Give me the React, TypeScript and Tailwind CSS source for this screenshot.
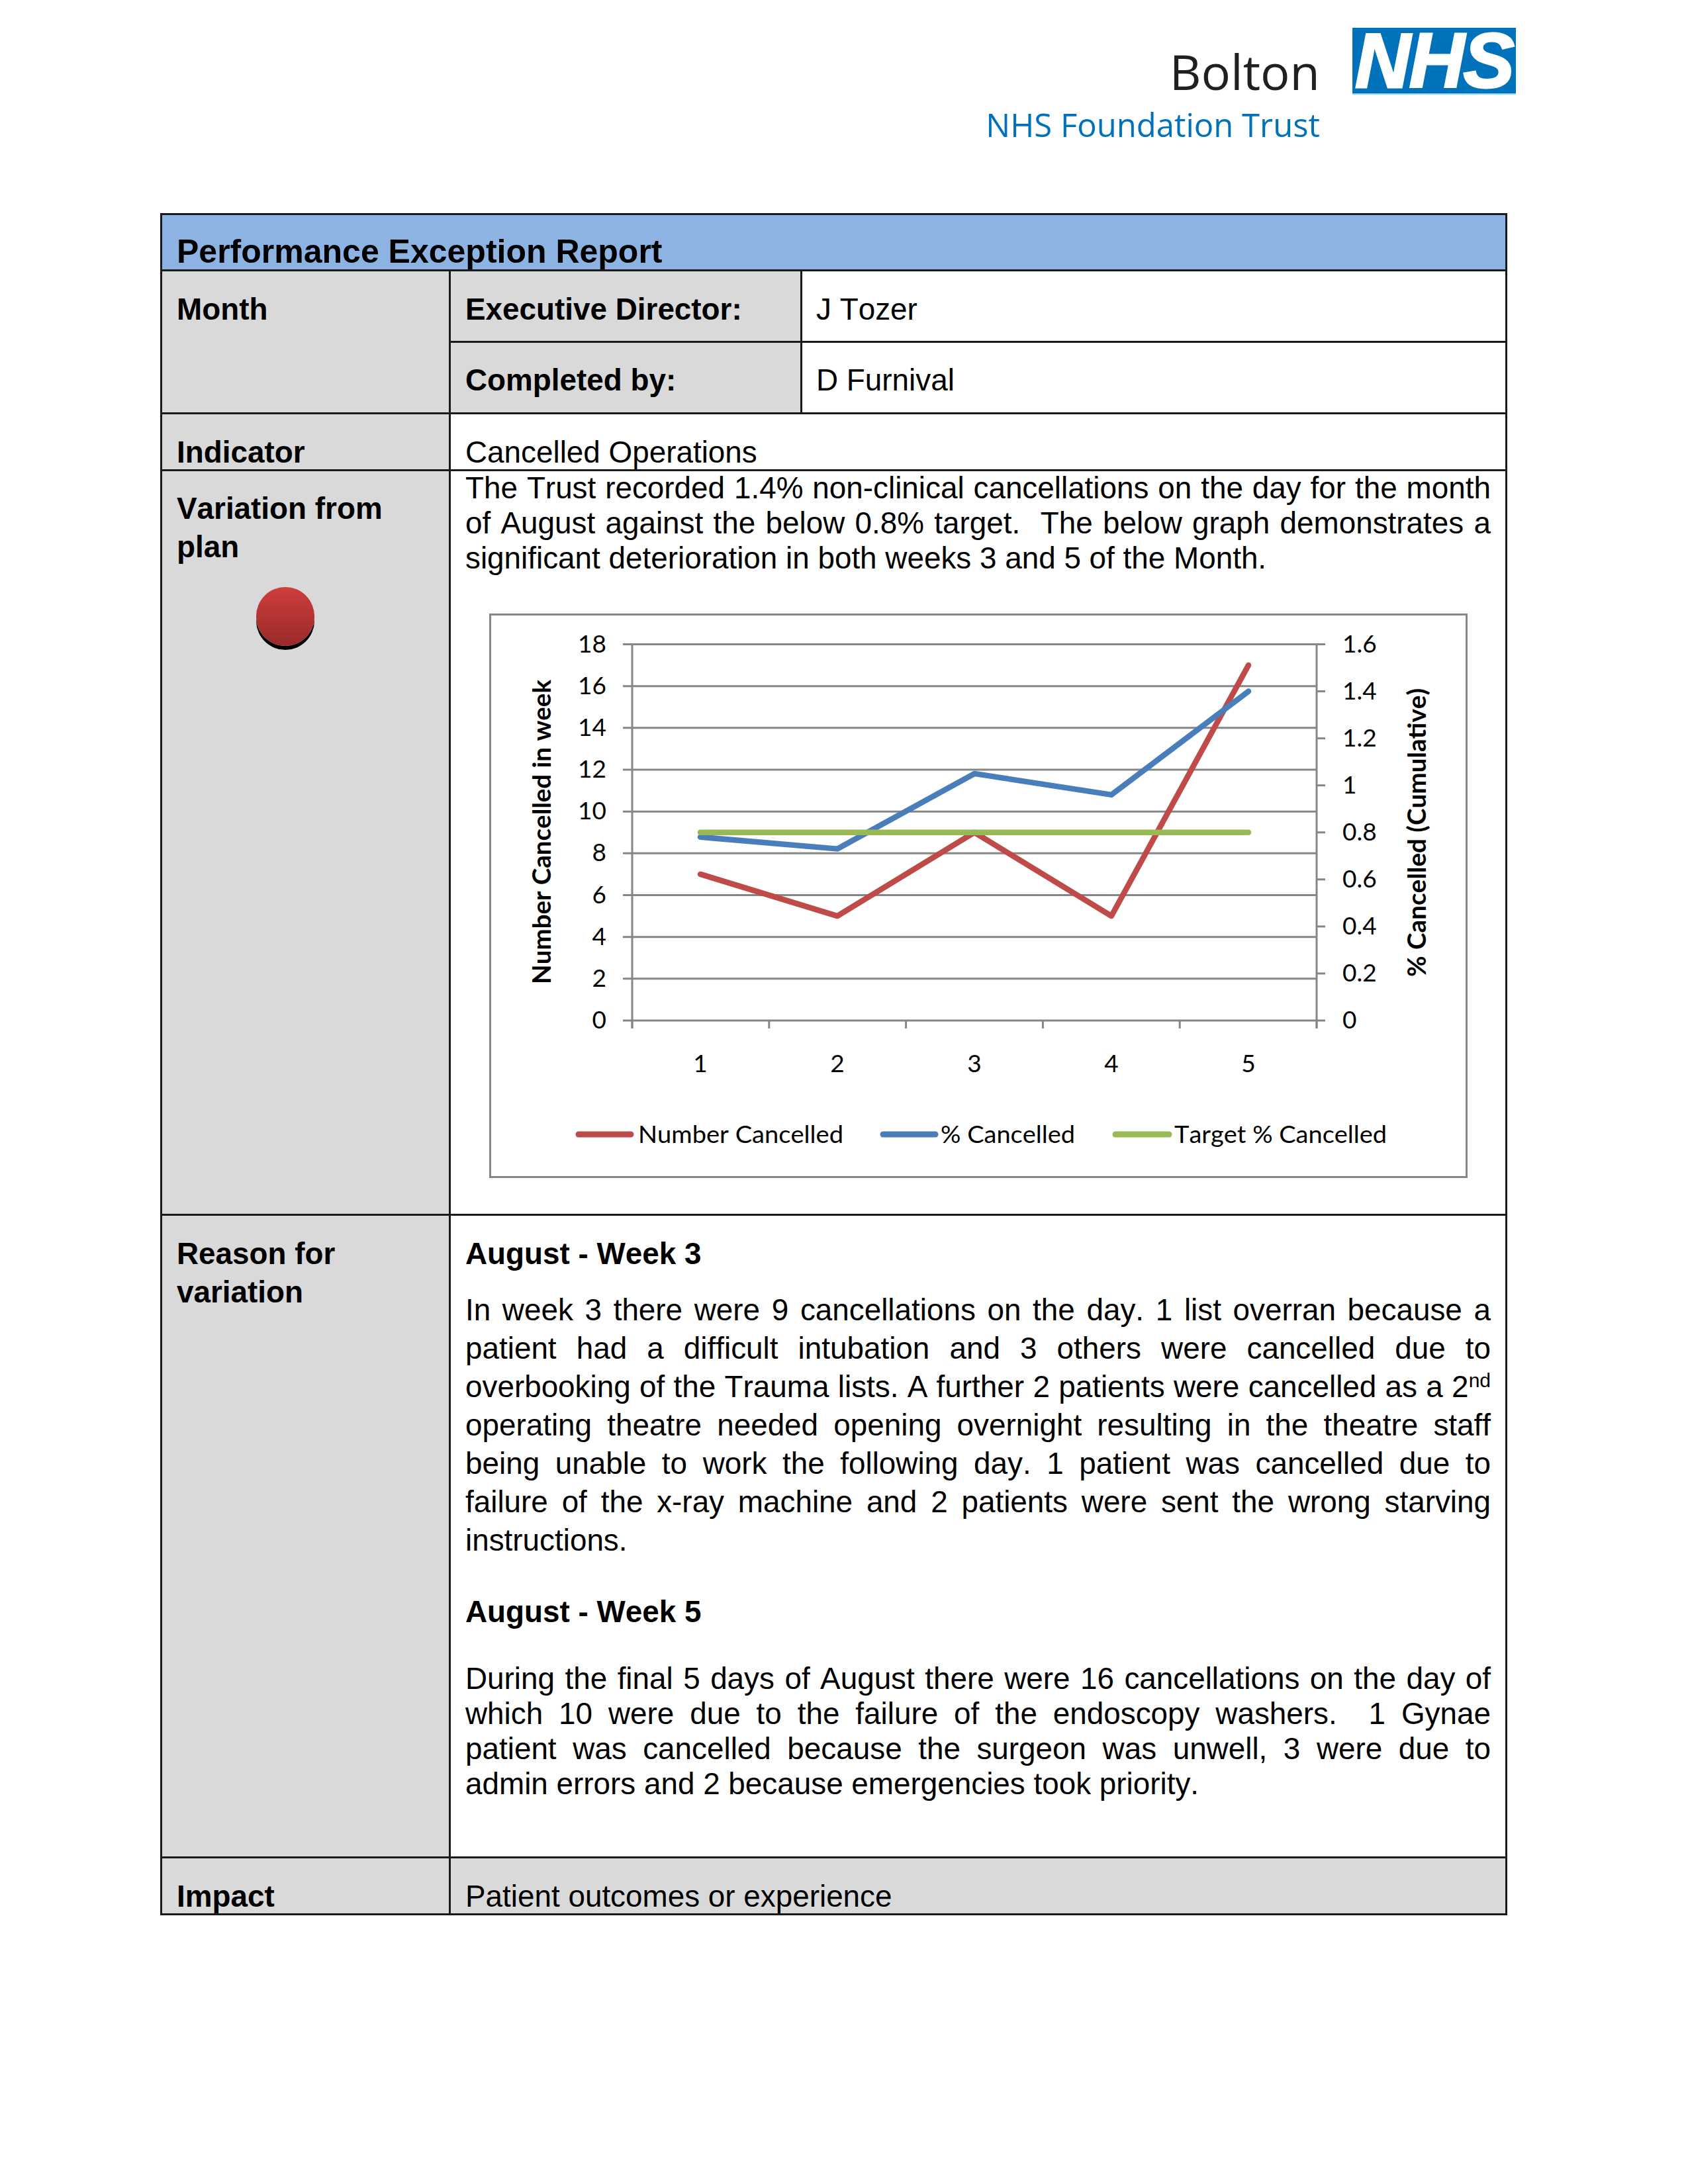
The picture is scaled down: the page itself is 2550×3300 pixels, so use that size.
const weeks = [1058, 1265, 1472, 1679, 1886];
const plotTop = 973.5;
const plotBottom = 1542;
const plotHeight = plotBottom - plotTop;

const leftLabels = [18, 16, 14, 12, 10, 8, 6, 4, 2, 0];
const rightLabels = ['1.6', '1.4', '1.2', '1', '0.8', '0.6', '0.4', '0.2', '0'];
const xTicks = [955, 1161.8, 1368.6, 1575.4, 1782.2, 1989];

const cancelled = [7, 5, 9, 5, 17];
const percent = [0.78, 0.73, 1.05, 0.96, 1.4];
const target = [0.8, 0.8, 0.8, 0.8, 0.8];

const toPoints = (values: number[], max: number) =>
  values.map((v, i) => `${weeks[i]},${plotBottom - (v / max) * plotHeight}`).join(' ');

const legend = [
  { color: '#BE4B48', x1: 874, x2: 953, label: 'Number Cancelled', tx: 964, len: 310 },
  { color: '#4A7EBB', x1: 1334, x2: 1413, label: '% Cancelled', tx: 1421, len: 203 },
  { color: '#98B954', x1: 1685, x2: 1766, label: 'Target % Cancelled', tx: 1774, len: 321 },
];

function Chart() {
  return (
    <div className="ml-[36px] mt-[57px] h-[853px] w-[1478px] border-[3px] border-[#868686]">
      <svg width={1472} height={847} viewBox="742 930 1472 847" className="block font-[Lato,sans-serif]">
        {leftLabels.map((label, i) => {
          const y = plotTop + (i * plotHeight) / 9;
          return (
            <g key={label}>
              <line x1={941} x2={1989} y1={y} y2={y} stroke="#868686" strokeWidth={3} />
              <text x={916} y={y + 12} textAnchor="end" fontSize={37} fill="#000">
                {label}
              </text>
            </g>
          );
        })}
        {rightLabels.map((label, i) => {
          const y = plotTop + (i * plotHeight) / 8;
          return (
            <g key={label}>
              <line x1={1989} x2={2002} y1={y} y2={y} stroke="#868686" strokeWidth={3} />
              <text x={2028} y={y + 12} fontSize={37} fill="#000">
                {label}
              </text>
            </g>
          );
        })}
        <line x1={955} x2={955} y1={plotTop} y2={1554} stroke="#868686" strokeWidth={3} />
        <line x1={1989} x2={1989} y1={plotTop} y2={1554} stroke="#868686" strokeWidth={3} />
        {xTicks.map((x) => (
          <line key={x} x1={x} x2={x} y1={plotBottom} y2={1554} stroke="#868686" strokeWidth={3} />
        ))}
        {weeks.map((x, i) => (
          <text key={x} x={x} y={1620} textAnchor="middle" fontSize={37} fill="#000">
            {i + 1}
          </text>
        ))}

        <polyline points={toPoints(cancelled, 18)} fill="none" stroke="#BE4B48" strokeWidth={8.5} strokeLinecap="round" strokeLinejoin="round" />
        <polyline points={toPoints(percent, 1.6)} fill="none" stroke="#4A7EBB" strokeWidth={8.5} strokeLinecap="round" strokeLinejoin="round" />
        <polyline points={toPoints(target, 1.6)} fill="none" stroke="#98B954" strokeWidth={8.5} strokeLinecap="round" strokeLinejoin="round" />

        <text transform="translate(832 1257) rotate(-90)" textAnchor="middle" fontSize={38} fontWeight={700} textLength={460} lengthAdjust="spacingAndGlyphs">
          Number Cancelled in week
        </text>
        <text transform="translate(2154 1258) rotate(-90)" textAnchor="middle" fontSize={38} fontWeight={700} textLength={436} lengthAdjust="spacingAndGlyphs">
          % Cancelled (Cumulative)
        </text>

        {legend.map((item) => (
          <g key={item.label}>
            <line x1={item.x1} x2={item.x2} y1={1714} y2={1714} stroke={item.color} strokeWidth={9} strokeLinecap="round" />
            <text x={item.tx} y={1727} fontSize={37} textLength={item.len} lengthAdjust="spacingAndGlyphs" fill="#000">
              {item.label}
            </text>
          </g>
        ))}
      </svg>
    </div>
  );
}

function Logo() {
  return (
    <header className="flex h-[322px] justify-end pr-[260px] pt-[42px]">
      <div className="mr-[49px] flex flex-col items-end font-['Open_Sans',sans-serif]">
        <div className="mt-[21px] text-[74px] font-medium leading-[90px] text-[#231f20]">Bolton</div>
        <div className="mt-[2px] text-[49px] font-medium leading-[66px] text-[#0072bc]">NHS Foundation Trust</div>
      </div>
      <div className="flex h-[101px] w-[247px] items-center justify-center border-b-2 border-[#8fd6f2] bg-[#0072bc] text-[116px] font-bold italic leading-none tracking-[-2px] text-white [-webkit-text-stroke:3px_white]">
        NHS
      </div>
    </header>
  );
}

export default function App() {
  return (
    <div className="h-[3300px] w-[2550px] bg-white font-['Liberation_Sans',Arial,sans-serif] text-[45.83px] leading-[58px] text-black [font-kerning:none]">
      <Logo />

      <main className="ml-[242px] grid w-[2035px] grid-cols-[436px_531px_1062px] grid-rows-[85px_108px_108px_86px_1125px_971px_83px] border-[3px] border-[#1a1a1a]">
        {/* Title */}
        <div className="col-span-3 border-b-[3px] border-[#1a1a1a] bg-[#8db3e2] pl-[22px] pt-[26px] text-[50px] font-bold">
          Performance Exception Report
        </div>

        {/* Month / director */}
        <div className="row-span-2 border-b-[3px] border-r-[3px] border-[#1a1a1a] bg-[#d9d9d9] pl-[22px] pt-[29px] font-bold">
          Month
        </div>
        <div className="border-b-[3px] border-r-[3px] border-[#1a1a1a] bg-[#d9d9d9] pl-[22px] pt-[29px] font-bold">
          Executive Director:
        </div>
        <div className="border-b-[3px] border-[#1a1a1a] pl-[21px] pt-[29px]">J Tozer</div>
        <div className="border-b-[3px] border-r-[3px] border-[#1a1a1a] bg-[#d9d9d9] pl-[22px] pt-[28px] font-bold">
          Completed by:
        </div>
        <div className="border-b-[3px] border-[#1a1a1a] pl-[21px] pt-[28px]">D Furnival</div>

        {/* Indicator */}
        <div className="border-b-[3px] border-r-[3px] border-[#1a1a1a] bg-[#d9d9d9] pl-[22px] pt-[29px] font-bold">
          Indicator
        </div>
        <div className="col-span-2 border-b-[3px] border-[#1a1a1a] pl-[22px] pt-[29px]">Cancelled Operations</div>

        {/* Variation from plan */}
        <div className="border-b-[3px] border-r-[3px] border-[#1a1a1a] bg-[#d9d9d9] pl-[22px] pt-[28px]">
          <div className="font-bold">
            Variation from
            <br />
            plan
          </div>
          <div className="ml-[120px] mt-[31px] h-[89px] w-[88px] rounded-full bg-linear-to-b from-[#d03d3d] to-[#992a2a] shadow-[0_6px_0_#000]" />
        </div>
        <div className="col-span-2 border-b-[3px] border-[#1a1a1a] pl-[22px] pr-[22px]">
          <p className="-mt-[1px] text-justify leading-[53px]">
            The Trust recorded 1.4% non-clinical cancellations on the day for the month of August against the below 0.8% target.&nbsp; The below graph demonstrates a significant deterioration in both weeks 3 and 5 of the Month.
          </p>
          <Chart />
        </div>

        {/* Reason for variation */}
        <div className="border-b-[3px] border-r-[3px] border-[#1a1a1a] bg-[#d9d9d9] pl-[22px] pt-[29px] font-bold">
          Reason for
          <br />
          variation
        </div>
        <div className="col-span-2 border-b-[3px] border-[#1a1a1a] pl-[22px] pr-[22px] pt-[29px]">
          <h3 className="font-bold">August - Week 3</h3>
          <p className="mt-[27px] text-justify">
            In week 3 there were 9 cancellations on the day. 1 list overran because a patient had a difficult intubation and 3 others were cancelled due to overbooking of the Trauma lists. A further 2 patients were cancelled as a 2<sup className="text-[30px]">nd</sup> operating theatre needed opening overnight resulting in the theatre staff being unable to work the following day. 1 patient was cancelled due to failure of the x-ray machine and 2 patients were sent the wrong starving instructions.
          </p>
          <h3 className="mt-[50px] font-bold">August - Week 5</h3>
          <p className="mt-[45px] text-justify leading-[53px]">
            During the final 5 days of August there were 16 cancellations on the day of which 10 were due to the failure of the endoscopy washers.&nbsp; 1 Gynae patient was cancelled because the surgeon was unwell, 3 were due to admin errors and 2 because emergencies took priority.
          </p>
        </div>

        {/* Impact */}
        <div className="border-r-[3px] border-[#1a1a1a] bg-[#d9d9d9] pl-[22px] pt-[29px] font-bold">Impact</div>
        <div className="col-span-2 bg-[#d9d9d9] pl-[22px] pt-[29px]">Patient outcomes or experience</div>
      </main>
    </div>
  );
}
